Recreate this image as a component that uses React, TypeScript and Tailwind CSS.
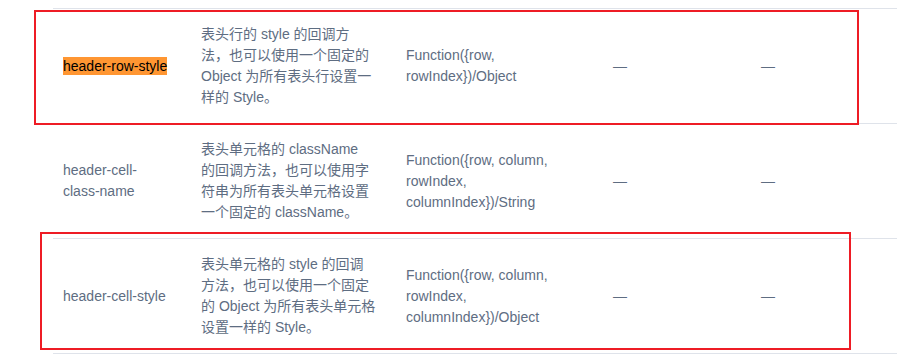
import React from "react";

type Row = {
  name: string[];
  hit?: boolean;
  desc: string[];
  type: string[];
  box?: string;
};

const ROWS: Row[] = [
  {
    name: ["header-row-style"],
    hit: true,
    desc: ["表头行的 style 的回调方", "法，也可以使用一个固定的", "Object 为所有表头行设置一", "样的 Style。"],
    type: ["Function({row,", "rowIndex})/Object"],
  },
  {
    name: ["header-cell-", "class-name"],
    desc: ["表头单元格的 className", "的回调方法，也可以使用字", "符串为所有表头单元格设置", "一个固定的 className。"],
    type: ["Function({row, column,", "rowIndex,", "columnIndex})/String"],
  },
  {
    name: ["header-cell-style"],
    desc: ["表头单元格的 style 的回调", "方法，也可以使用一个固定", "的 Object 为所有表头单元格", "设置一样的 Style。"],
    type: ["Function({row, column,", "rowIndex,", "columnIndex})/Object"],
  },
];

function Lines({ lines }: { lines: string[] }) {
  return (
    <div>
      {lines.map((l, i) => (
        <div key={i} className="whitespace-nowrap">
          {l}
        </div>
      ))}
    </div>
  );
}

export default function App() {
  return (
    <div
      className="relative w-[897px] h-[355px] overflow-hidden bg-white pt-[8px] pl-[53px] text-[14px] leading-[21px] text-[#5e6d82]"
      style={{ fontFamily: '"Liberation Sans", Arial, "Noto Sans CJK SC", sans-serif' }}
    >
      <div className="border-t border-[#dfe3ea]">
        {ROWS.map((r, i) => (
          <div key={i} className="flex items-center h-[115px] border-b border-[#dfe3ea]">
            <div className="w-[138px] shrink-0 px-[10px]">
              {r.hit ? (
                <span className="inline-block bg-[#ff9632] text-black leading-[18px]">{r.name[0]}</span>
              ) : (
                <Lines lines={r.name} />
              )}
            </div>
            <div className="w-[205px] shrink-0 px-[10px]">
              <Lines lines={r.desc} />
            </div>
            <div className="w-[207px] shrink-0 px-[10px]">
              <Lines lines={r.type} />
            </div>
            <div className="w-[148px] shrink-0 px-[10px]">—</div>
            <div className="flex-1 px-[10px]">—</div>
          </div>
        ))}
      </div>

      {/* annotation boxes */}
      <div className="absolute left-[34px] top-[10px] w-[825px] h-[115px] border-2 border-[#ee1c25]" />
      <div className="absolute left-[40px] top-[232px] w-[811px] h-[118px] border-2 border-[#ee1c25]" />
    </div>
  );
}
